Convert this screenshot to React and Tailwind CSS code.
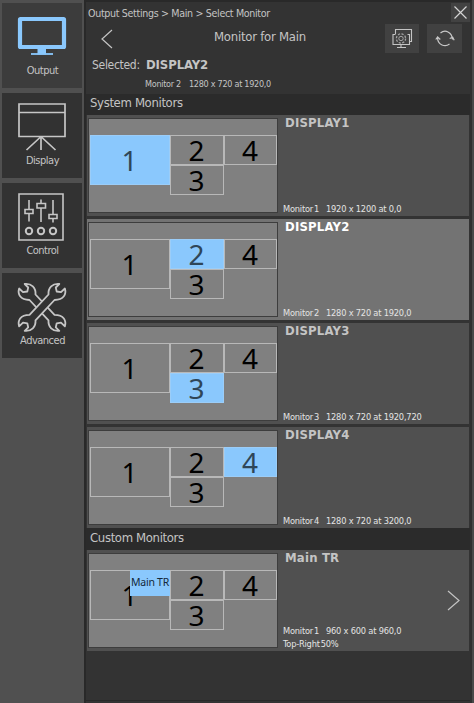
import React, { useState } from 'react';

const OutputIcon = () => (
  <svg width="80" height="60" viewBox="0 0 80 60" fill="none" stroke="#8ac8fd">
    <rect x="18" y="16" width="44" height="28" rx="0.5" strokeWidth="4.2" />
    <path d="M35.5 46h8.5v5.5h-8.5z" fill="#8ac8fd" stroke="none" />
    <path d="M29 51h22" strokeWidth="1.8" />
  </svg>
);

const DisplayIcon = () => (
  <svg width="80" height="60" viewBox="0 0 80 60" fill="none" stroke="#c6c6c6" strokeWidth="1.7">
    <path d="M17 11h46v32.5h-46zM17 19.5h46M39 43.5v13.5M38 44.5l-13.5 12.5M40 44.5l13.5 12.5" />
  </svg>
);

const ControlIcon = () => (
  <svg width="80" height="60" viewBox="0 0 80 60" fill="none" stroke="#c6c6c6" strokeWidth="1.6">
    <path d="M17 11h44v46h-44z" />
    <path d="M27 17v9.5M27 30.5v8M39 16.5v4M39 25v14M51 17v14.5M51 35.5v4" />
    <path d="M23 26.5h8v4h-8zM35 20.5h8.5v4.5h-8.5zM47 31.500h8v4h-8z" />
    <circle cx="27" cy="48" r="3.2" strokeWidth="2" />
    <circle cx="39" cy="48" r="3.2" strokeWidth="2" />
    <circle cx="51" cy="48" r="3.2" strokeWidth="2" />
  </svg>
);

const wrench =
  'M22.7 11l3.5 3.5-.9 4-4.3.7-3.9-3.7C15.5 21 18 27 27.5 27L46.5 47.3C46 54 50.5 58.5 57.3 57.8l-3.5-3.5.9-4 4.3-.7 3.9 3.7C64.5 47.8 62 41.8 52.5 41.8L33.5 21.5C34 14.8 29.5 10.3 22.7 11z';

const AdvancedIcon = () => (
  <svg width="80" height="60" viewBox="0 0 80 60" strokeLinejoin="round" fill="#323232" stroke="#c6c6c6" strokeWidth="1.8">
    <path d={wrench} />
    <path d={wrench} transform="translate(80 0) scale(-1 1)" />
  </svg>
);

const MonitorGearIcon = () => (
  <svg width="34" height="29" viewBox="0 0 34 29" fill="none" stroke="#c4c4c4">
    <path d="M10.5 10V5.5h16v12h-2M10.500 10.5H8v10h16.500v-10h-2M16 20.5v3M12 23.500h9" strokeWidth="1.1" />
    <circle cx="16" cy="14.500" r="4.6" strokeDasharray="2.2 1.400" strokeWidth="1.3" stroke="#a4a4a4" />
    <circle cx="16" cy="14.500" r="2.200" stroke="#a4a4a4" />
  </svg>
);

const RefreshIcon = () => (
  <svg width="35" height="29" viewBox="0 0 35 29" fill="none" stroke="#c8c8c8" strokeWidth="1.2">
    <path d="M13.500 9c4.500-3.800 11.500-1.200 12 6.500M22.500 20c-4.500 3.500-11.500 1-12-6M8.800 15.500l1.800-2.500 2.700 2.500M22.700 14.500l3-1.200 1.500 3" />
  </svg>
);

const tabs = [
  { name: 'Output', Icon: OutputIcon },
  { name: 'Display', Icon: DisplayIcon },
  { name: 'Control', Icon: ControlIcon },
  { name: 'Advanced', Icon: AdvancedIcon },
];

const systemMonitors = [
  { id: 1, name: 'DISPLAY1', info: '1920 x 1200 at 0,0' },
  { id: 2, name: 'DISPLAY2', info: '1280 x 720 at 1920,0' },
  { id: 3, name: 'DISPLAY3', info: '1280 x 720 at 1920,720' },
  { id: 4, name: 'DISPLAY4', info: '1280 x 720 at 3200,0' },
];

const Screen = ({ n, active, className }) => (
  <div
    className={`border flex items-center justify-center text-[28px] ${
      active ? 'bg-[#8ac8fd] border-[#9bcdf8] text-[#2f4658]' : 'border-[#b8b8b8] text-black'
    } ${className}`}
  >
    <span className="leading-[20px] -translate-x-[0.5px]">{n}</span>
  </div>
);

const Preview = ({ active, custom }) => (
  <div className="w-[190px] h-[95px] shrink-0 border border-[#3d3d3d] bg-[#808080] pt-[16px] pl-px font-['Noto_Sans',sans-serif]">
    <div className="relative flex items-start">
      <Screen n={1} active={active === 1} className="w-[80px] h-[50px]" />
      <div>
        <Screen n={2} active={active === 2} className="w-[54px] h-[30px]" />
        <Screen n={3} active={active === 3} className="w-[54px] h-[30px]" />
      </div>
      <Screen n={4} active={active === 4} className="w-[53px] h-[30px]" />
      {custom && (
        <div className="absolute left-[40px] top-0 w-[40px] h-[26px] bg-[#8ac8fd] text-[#14283a] text-[10.5px] tracking-[-0.25px] flex items-center justify-center whitespace-nowrap">
          {custom}
        </div>
      )}
    </div>
  </div>
);

const MonitorRow = ({ name, monitor, info, note, active, custom, selected, onClick }) => (
  <div
    onClick={onClick}
    className={`relative flex h-[101px] pl-px pt-[3px] ${selected ? 'bg-[#737373] text-white' : 'bg-[#505050] text-[#c4c4c4]'}`}
  >
    <Preview active={active} custom={custom} />
    <div className="flex flex-col flex-1 pl-[5px]">
      <h3 className="pl-[2px] -mt-[3px] text-[13px] leading-[16px] tracking-[0.2px] font-bold">{name}</h3>
      <div className={`mt-auto text-[9.2px] leading-[13px] tracking-[-0.2px] text-[#e4e4e4] ${note ? 'pb-px' : 'pb-px'}`}>
        <p className="flex">
          <span className="w-[43px] [word-spacing:-1.5px]">Monitor {monitor}</span>
          <span>{info}</span>
        </p>
        {note && <p className="[word-spacing:-1.5px]">{note}</p>}
      </div>
    </div>
    {custom && (
      <svg className="absolute right-[9px] top-[40px]" width="13" height="21" fill="none" stroke="#c4c4c4" strokeWidth="1.2">
        <path d="M1 1l11 9.500L1 20" />
      </svg>
    )}
  </div>
);

const App = () => {
  const [tab, setTab] = useState('Output');
  const [selected, setSelected] = useState(2);

  return (
    <div className="flex w-[474px] h-[703px] overflow-hidden bg-[#4b4b4b] text-[#c4c4c4] font-['DejaVu_Sans_Condensed','DejaVu_Sans',sans-serif] [font-stretch:condensed]">
      <nav className="w-[84px] shrink-0 bg-[#505050] pt-[3px] pl-[2px] flex flex-col gap-[5px]">
        {tabs.map(({ name, Icon }) => (
          <button
            key={name}
            onClick={() => setTab(name)}
            className={`w-[80px] h-[85px] flex flex-col items-center text-[11px] leading-[15px] tracking-[-0.5px] ${
              tab === name ? 'bg-[#3c3c3c]' : 'bg-[#323232]'
            }`}
          >
            <Icon />
            <span className="translate-x-[0.5px]">{name}</span>
          </button>
        ))}
      </nav>

      <main className="w-[388px] shrink-0 bg-[#333333] border-t-2 border-l-2 border-[#292929] border-r-2 border-r-[#303030] flex flex-col">
        <header className="h-[92px] relative">
          <p className="pl-[2px] pt-[4px] text-[10.6px] leading-[14px] tracking-[-0.33px]">Output Settings &gt; Main &gt; Select Monitor</p>
          <button className="absolute right-0 top-[1px] w-[19px] h-[19px] bg-[#424242]">
            <svg width="19" height="19" stroke="#d4d4d4" strokeWidth="1.2">
              <path d="M3.500 3.500l12 12M15.500 3.500l-12 12" />
            </svg>
          </button>
          <div className="flex items-start pt-[4px]">
            <svg className="ml-[15px] mt-[5px]" width="12" height="20" fill="none" stroke="#c4c4c4" strokeWidth="1.2">
              <path d="M11 1L1 10l10 9" />
            </svg>
            <h1 className="ml-[101px] mt-[4px] w-[93px] text-[13px] leading-[18px] tracking-[-0.25px] whitespace-nowrap">Monitor for Main</h1>
            <button className="ml-[78px] w-[34px] h-[29px] bg-[#414141]"><MonitorGearIcon /></button>
            <button className="ml-[8px] w-[35px] h-[29px] bg-[#414141]"><RefreshIcon /></button>
          </div>
          <div className="flex items-baseline pl-[6px] mt-[3px] leading-[18px]">
            <span className="w-[54px] text-[12px] tracking-[-0.3px]">Selected:</span>
            <span className="text-[13px] font-bold tracking-[-0.1px]">DISPLAY{selected}</span>
          </div>
          <p className="flex pl-[59px] mt-[4px] text-[9px] leading-[12px] tracking-[-0.28px]">
            <span className="w-[44px]">Monitor {selected}</span>
            <span>{systemMonitors[selected - 1].info}</span>
          </p>
        </header>

        <h2 className="h-[21px] shrink-0 bg-[#2b2b2b] pl-[4px] text-[13px] leading-[18px] tracking-[-0.35px]">System Monitors</h2>
        <div className="flex flex-col gap-[3px] px-px">
          {systemMonitors.map(m => (
            <MonitorRow
              key={m.id}
              name={m.name}
              monitor={m.id}
              info={m.info}
              active={m.id}
              selected={m.id === selected}
              onClick={() => setSelected(m.id)}
            />
          ))}
        </div>
        <h2 className="h-[22px] shrink-0 bg-[#2b2b2b] pl-[4px] text-[13px] leading-[20px] tracking-[-0.35px]">Custom Monitors</h2>
        <div className="px-px">
          <MonitorRow name="Main TR" monitor={1} info="960 x 600 at 960,0" note="Top-Right 50%" custom="Main TR" />
        </div>
        <div className="mt-auto h-[3px] border-t border-[#292929]" />
      </main>
      <div className="w-[2px] bg-[#494949]" />
    </div>
  );
};

export default App;
